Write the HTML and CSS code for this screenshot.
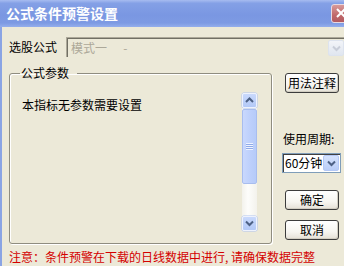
FILE: index.html
```html
<!DOCTYPE html>
<html>
<head>
<meta charset="utf-8">
<link rel="stylesheet" href="styles.css">
</head>
<body>
<div class="window">
  <div class="titlebar">
    <span class="title">公式条件预警设置</span>
    <span class="close"><svg width="21" height="19" viewBox="0 0 21 19"><path d="M6 5 L14 13 M14 5 L6 13" stroke="#fff" stroke-width="2" fill="none"/></svg></span>
  </div>
  <div class="client">
    <div class="row-formula">
      <span class="lbl">选股公式</span>
      <div class="combo combo-disabled">
        <span class="combo-text">模式一&nbsp;&nbsp;&nbsp;&nbsp;&nbsp;&nbsp;-</span>
        <span class="combo-btn btn-disabled"><svg width="9" height="7" viewBox="0 0 9 7"><path d="M1 1.5 L4.5 5 L8 1.5" stroke="#c8cdd8" stroke-width="2" fill="none"/></svg></span>
      </div>
    </div>
    <div class="main">
      <fieldset class="group">
        <legend>公式参数</legend>
        <div class="editbox">
          <div class="edit-text">本指标无参数需要设置</div>
          <div class="vscroll">
            <div class="sb-btn"><svg width="9" height="7" viewBox="0 0 9 7"><path d="M1 5 L4.5 1.5 L8 5" stroke="#4d6185" stroke-width="2" fill="none"/></svg></div>
            <div class="sb-thumb"><span class="grip"></span></div>
            <div class="sb-track"></div>
            <div class="sb-btn"><svg width="9" height="7" viewBox="0 0 9 7"><path d="M1 1.5 L4.5 5 L8 1.5" stroke="#4d6185" stroke-width="2" fill="none"/></svg></div>
          </div>
        </div>
      </fieldset>
      <div class="side">
        <button class="btn btn-usage">用法注释</button>
        <div class="period-lbl">使用周期:</div>
        <div class="combo combo-period">
          <span class="combo-text">60分钟</span>
          <span class="combo-btn"><svg width="9" height="7" viewBox="0 0 9 7"><path d="M1 1.5 L4.5 5 L8 1.5" stroke="#4d6185" stroke-width="2" fill="none"/></svg></span>
        </div>
        <button class="btn btn-ok">确定</button>
        <button class="btn btn-cancel">取消</button>
      </div>
    </div>
    <div class="note">注意：条件预警在下载的日线数据中进行, 请确保数据完整</div>
  </div>
</div>
</body>
</html>
```

FILE: styles.css
```css
html, body {
  margin: 0;
  padding: 0;
  width: 344px;
  height: 266px;
  overflow: hidden;
  background: #ece9d8;
  font-family: "Noto Sans CJK SC", "Liberation Sans", sans-serif;
  font-size: 12px;
  color: #000;
}
.window {
  width: 344px;
  height: 266px;
  display: flex;
  flex-direction: column;
}
.titlebar {
  height: 27px;
  flex: none;
  display: flex;
  align-items: flex-start;
  padding-left: 6px;
  background: linear-gradient(#a7bcf0 0, #84a0e6 12%, #7a97e2 55%, #7d9ae3 85%, #94aeec 100%);
  overflow: hidden;
}
.title {
  color: #fff;
  font-weight: bold;
  font-size: 14px;
  line-height: 27px;
  letter-spacing: 0px;
}
.close {
  margin-left: auto;
  margin-top: 4px;
  margin-right: -8px;
  width: 21px;
  height: 19px;
  box-sizing: border-box;
  border: 1px solid #e8d8e0;
  border-radius: 3px;
  background: linear-gradient(#d89a9a, #c0686a 60%, #b25a60);
  display: flex;
  align-items: center;
  justify-content: center;
}
.close svg { display: block; margin: -1px; }
.client {
  flex: 1;
  border-left: 2px solid #8aa4e4;
  padding-left: 7px;
  display: flex;
  flex-direction: column;
}
.row-formula {
  margin-top: 10px;
  height: 20px;
  display: flex;
  align-items: center;
}
.lbl {
  width: 57px;
  line-height: 16px;
}
.combo {
  height: 20px;
  box-sizing: border-box;
  display: flex;
  align-items: stretch;
}
.combo-disabled {
  flex: 1;
  border-top: 1px solid #aca899;
  border-left: 1px solid #aca899;
  box-shadow: inset 1px 1px 0 #716f64;
  background: #ece9d8;
  padding: 2px 0 1px 2px;
}
.combo-text {
  flex: 1;
  line-height: 16px;
  padding-left: 2px;
}
.combo-disabled .combo-text { color: #aca899; }
.combo-btn {
  width: 16px;
  box-sizing: border-box;
  border: 1px solid #b4c8f6;
  border-radius: 2px;
  background: linear-gradient(#d6e2fc, #b9cdf8);
  display: flex;
  align-items: center;
  justify-content: center;
}
.btn-disabled {
  border-color: #dde3ee;
  background: linear-gradient(#f2f4f8, #e0e6f0);
}
.main {
  margin-top: 9px;
  display: flex;
  align-items: flex-start;
}
.group {
  margin: 0;
  width: 263px;
  box-sizing: border-box;
  border: 1px solid #8f8d80;
  border-radius: 3px;
  box-shadow: inset 1px 1px 0 #fff, 1px 1px 0 #fff;
  padding: 12px 14px 11px 10px;
}
.group legend {
  padding: 0 8px 0 1px;
  line-height: 14px;
  height: 14px;
}
.editbox {
  height: 140px;
  box-sizing: border-box;
  padding: 1px 0 1px 0;
  display: flex;
}
.edit-text {
  flex: 1;
  padding-left: 2px;
  padding-top: 4px;
  line-height: 16px;
}
.vscroll {
  width: 15px;
  display: flex;
  flex-direction: column;
  background: #f7f6f1;
}
.sb-btn {
  height: 15px;
  box-sizing: border-box;
  border: 1px solid #eef2fd;
  border-radius: 2px;
  background: linear-gradient(#c9d9fc, #b3c9f7);
  display: flex;
  align-items: center;
  justify-content: center;
  box-shadow: 0 0 0 0.5px #b0c4f0;
}
.sb-thumb {
  height: 75px;
  margin-top: 1px;
  box-sizing: border-box;
  border: 1px solid #a8bdee;
  border-radius: 2px;
  background: linear-gradient(90deg, #c9d8fd, #bccffb 60%, #b6cbf9);
  display: flex;
  align-items: center;
  justify-content: center;
}
.grip {
  width: 7px;
  height: 7px;
  background: repeating-linear-gradient(#eef3ff 0, #eef3ff 1px, #8faae8 1px, #8faae8 2px);
}
.sb-track {
  flex: 1;
  background: linear-gradient(90deg, #f3f2ec, #fdfdfb 40%, #f3f2ec);
}
.side {
  margin-left: 10px;
  width: 62px;
  display: flex;
  flex-direction: column;
  align-items: flex-start;
}
.btn {
  width: 54px;
  height: 20px;
  margin-left: 3px;
  box-sizing: border-box;
  border: 1px solid #3c3c3c;
  border-radius: 3px;
  background: linear-gradient(#ffffff, #f6f5f0 60%, #e4e0d6);
  box-shadow: inset -1px -1px 0 #d2cec2;
  font-family: "Noto Sans CJK SC", sans-serif;
  font-size: 12px;
  line-height: 16px;
  padding: 0;
  color: #000;
}
.btn-usage { margin-top: 7px; }
.period-lbl {
  margin-top: 38px;
  margin-left: 1px;
  line-height: 16px;
}
.combo-period {
  margin-top: 6px;
  width: 59px;
  border: 1px solid #7f9db9;
  box-shadow: inset 1px 1px 0 #404040;
  background: #fff;
  padding: 1px 1px 1px 1px;
}
.combo-period .combo-text { padding-left: 1px; }
.btn-ok { margin-top: 17px; }
.btn-cancel { margin-top: 10px; }
.note {
  margin-top: 5px;
  line-height: 16px;
  color: #d40000;
  white-space: nowrap;
}
```
